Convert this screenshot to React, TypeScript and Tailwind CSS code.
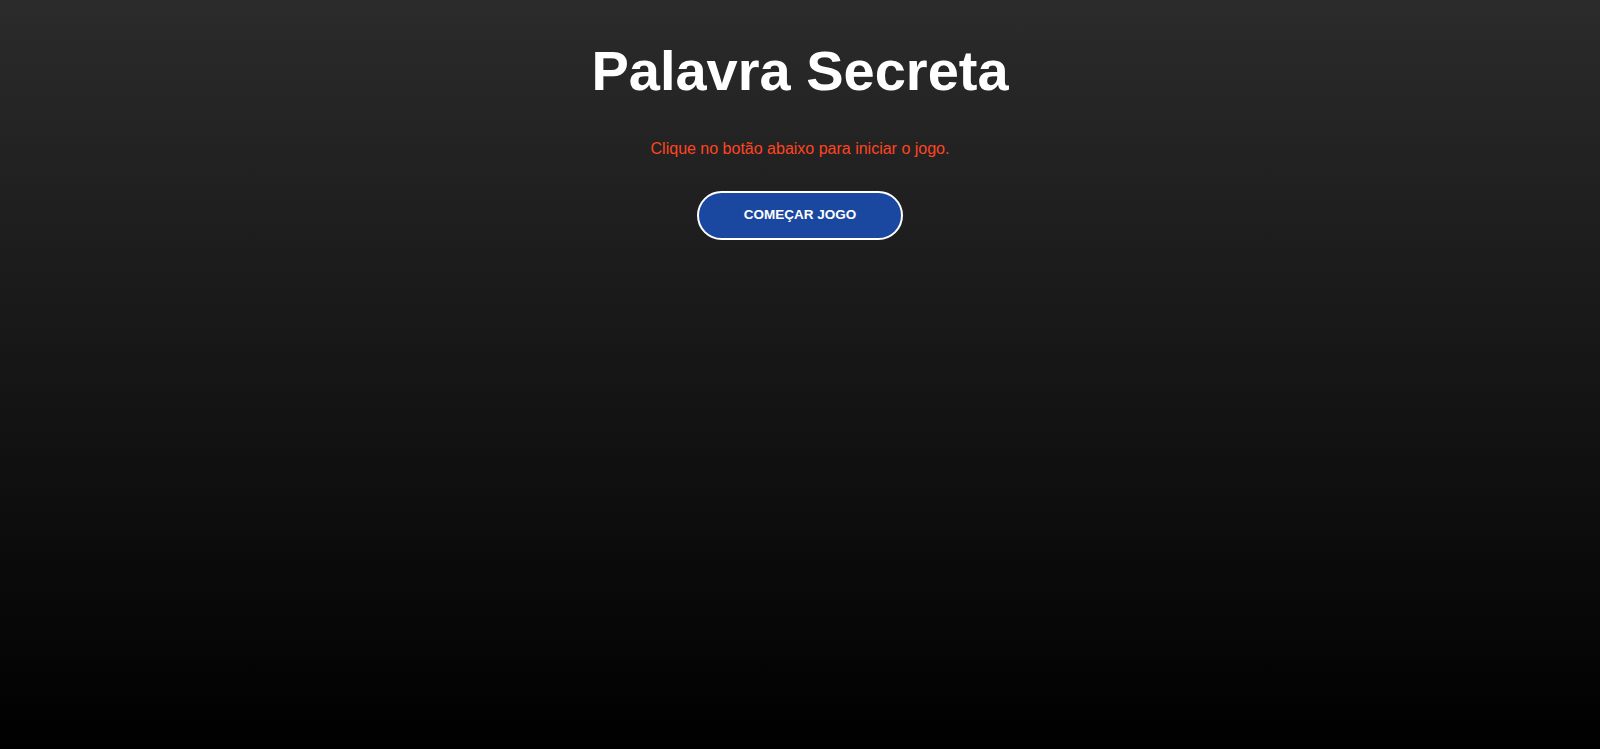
export default function App() {
  return (
    <div className="min-h-screen w-full bg-[linear-gradient(to_bottom,#2b2b2b,#000000)] font-['Liberation_Sans',Arial,sans-serif]">
      <main className="flex flex-col items-center pt-[39px]">
        <h1 className="text-[56px] leading-[64px] font-bold text-white">Palavra Secreta</h1>

        <p className="mt-[34px] text-base leading-6 text-[#ff4422]">
          Clique no botão abaixo para iniciar o jogo.
        </p>

        {/* start button */}
        <button
          type="button"
          className="mt-[30px] flex h-[49px] w-[206px] items-center justify-center rounded-full border-2 border-white bg-[#1a47a0] text-[13.5px] font-bold uppercase text-white"
        >
          Começar jogo
        </button>
      </main>
    </div>
  );
}
